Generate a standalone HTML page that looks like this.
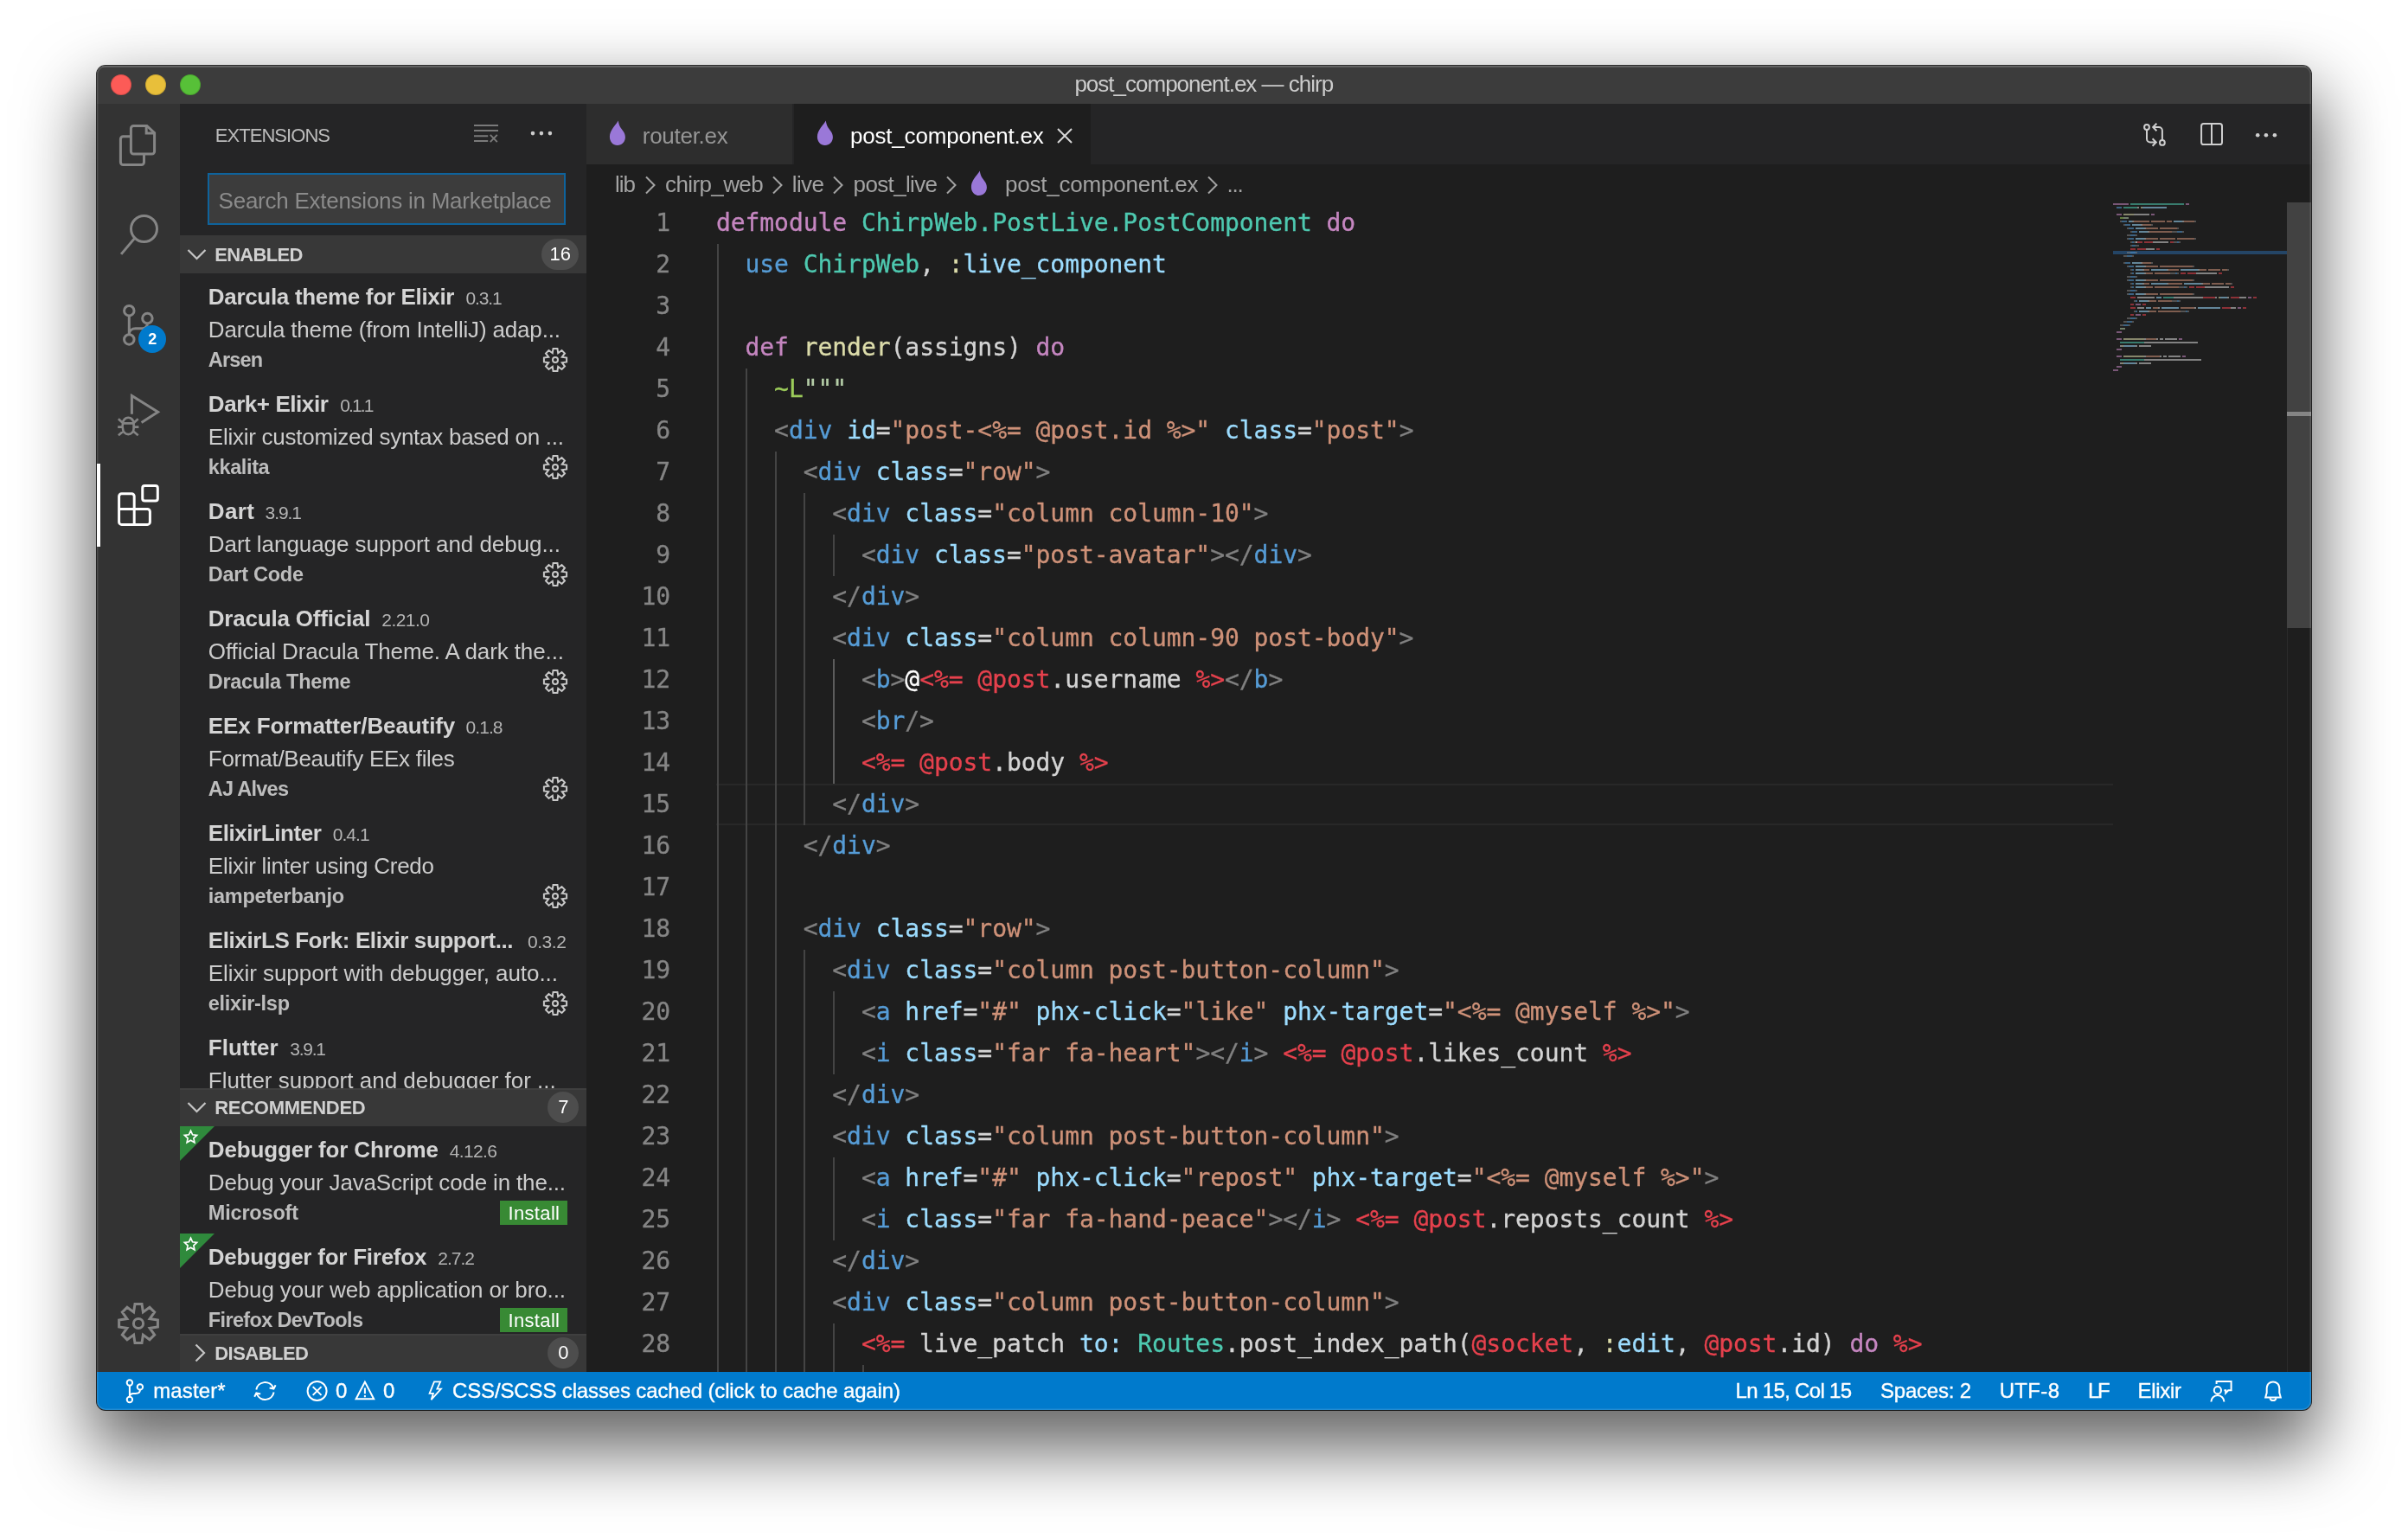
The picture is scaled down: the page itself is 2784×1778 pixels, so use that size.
<!DOCTYPE html>
<html><head><meta charset="utf-8"><title>post_component.ex — chirp</title>
<style>
html,body{margin:0;padding:0}
body{width:2784px;height:1778px;background:#fff;position:relative;overflow:hidden;font-family:'Liberation Sans', sans-serif;}
#win{position:absolute;left:112px;top:76px;width:2560px;height:1554px;border-radius:10px;overflow:hidden;background:#1e1e1e;will-change:transform;}
#shadow{position:absolute;left:112px;top:76px;width:2560px;height:1554px;border-radius:10px;box-shadow:0 0 0 1px rgba(0,0,0,0.8),0 38px 80px 9px rgba(0,0,0,0.6);}
.t{position:absolute;white-space:pre;}
.code{font-family:'DejaVu Sans Mono', 'Liberation Mono', monospace;font-size:28px;-webkit-text-stroke:0.3px;}
.code .ln{position:absolute;left:0;width:97px;text-align:right;color:#858585;line-height:48px;height:48px;letter-spacing:-0.06px}
.code .cl{position:absolute;white-space:pre;line-height:48px;height:48px;letter-spacing:-0.057px}
.code b{font-weight:400}
.code i.g{position:absolute;width:2px;height:48px;background:#444444}
.code i.ga{background:#5c5c5c}
.code b.cy{color:#dcdcaa}
.code b.ck{color:#c586c0}
.code b.cm{color:#4ec9b0}
.code b.cu{color:#569cd6}
.code b.ca{color:#9cdcfe}
.code b.cf{color:#dcdcaa}
.code b.cp{color:#d4d4d4}
.code b.cw{color:#ffffff}
.code b.cg{color:#9ccc5a}
.code b.cq{color:#b5cea8}
.code b.ct{color:#808080}
.code b.cn{color:#569cd6}
.code b.cr{color:#9cdcfe}
.code b.cs{color:#ce9178}
.code b.ce{color:#e6414d}
</style></head>
<body>
<svg width="0" height="0" style="position:absolute"><defs><symbol id="gear" viewBox="-16 -16 32 32"><path d="M-2.45 -13.10L2.45 -13.10L3.21 -7.76L7.53 -11.00L11.00 -7.53L7.76 -3.21L13.10 -2.45L13.10 2.45L7.76 3.21L11.00 7.53L7.53 11.00L3.21 7.76L2.45 13.10L-2.45 13.10L-3.21 7.76L-7.53 11.00L-11.00 7.53L-7.76 3.21L-13.10 2.45L-13.10 -2.45L-7.76 -3.21L-11.00 -7.53L-7.53 -11.00L-3.21 -7.76Z" fill="none" stroke="#c8c8c8" stroke-width="2" stroke-linejoin="miter"/><circle r="3" fill="none" stroke="#c8c8c8" stroke-width="2"/></symbol>
<symbol id="gearbig" viewBox="-28 -28 56 56"><path d="M-4.00 -22.40L4.00 -22.40L5.43 -13.12L13.01 -18.67L18.67 -13.01L13.12 -5.43L22.40 -4.00L22.40 4.00L13.12 5.43L18.67 13.01L13.01 18.67L5.43 13.12L4.00 22.40L-4.00 22.40L-5.43 13.12L-13.01 18.67L-18.67 13.01L-13.12 5.43L-22.40 4.00L-22.40 -4.00L-13.12 -5.43L-18.67 -13.01L-13.01 -18.67L-5.43 -13.12Z" fill="none" stroke="#858585" stroke-width="3" stroke-linejoin="miter"/><circle r="5.6" fill="none" stroke="#858585" stroke-width="3"/></symbol></defs></svg>
<div id="shadow"></div>
<div id="win">
<div style="position:absolute;left:0px;top:0px;width:2560px;height:44px;background:#3c3c3c;box-shadow:inset 0 2px 0 rgba(255,255,255,0.12);"></div>
<div style="position:absolute;left:16px;top:10px;width:24px;height:24px;border-radius:50%;background:#fc5b57;box-shadow:inset 0 0 0 1px rgba(0,0,0,0.14)"></div>
<div style="position:absolute;left:56px;top:10px;width:24px;height:24px;border-radius:50%;background:#e8bf3a;box-shadow:inset 0 0 0 1px rgba(0,0,0,0.14)"></div>
<div style="position:absolute;left:96px;top:10px;width:24px;height:24px;border-radius:50%;background:#57c038;box-shadow:inset 0 0 0 1px rgba(0,0,0,0.14)"></div>
<span class="t" style="left:1130.4px;top:3.7px;font-size:26px;line-height:34px;color:#cccccc;letter-spacing:-0.997px;">post_component.ex — chirp</span>
<div style="position:absolute;left:0px;top:44px;width:96px;height:1466px;background:#333333;"></div>
<div style="position:absolute;left:0px;top:460px;width:4px;height:96px;background:#ffffff;"></div>
<svg style="position:absolute;left:0px;top:44px" width="96" height="1466" viewBox="112 120 96 1466" fill="none" stroke="#858585" stroke-width="3">
<path d="M154.4 145.5H169.8L178.6 153.6V175.1a3 3 0 0 1 -3 3H154.4a3 3 0 0 1 -3 -3V148.5a3 3 0 0 1 3 -3z"/>
<path d="M169.2 145.5V154.1H178.6"/>
<path d="M151.4 157.7H142.4a3 3 0 0 0 -3 3V187.5a3 3 0 0 0 3 3H163.5a3 3 0 0 0 3 -3V178.1"/>
<circle cx="166.5" cy="264.5" r="15"/>
<path d="M155.9 275.1L140.1 293.9"/>
<circle cx="149.3" cy="359.2" r="5.75"/><circle cx="170.4" cy="368.1" r="5.75"/><circle cx="149.3" cy="392.4" r="5.75"/>
<path d="M149.3 365V386.6M170.4 373.9c0 5.9 -4.6 5.9 -9 5.9h-4.5c-4.4 0 -7.6 2.6 -7.6 6.8"/>
<path d="M152.4 478.8V457.4L182.6 476.3L163.6 488.6"/>
<g stroke-width="2.6"><path d="M142 489.4H154.6M142 495.5a6.3 9.3 0 0 1 0 -6.1a6.3 6.6 0 0 1 12.6 0v6.1a6.3 6.6 0 0 1 -12.6 0zM136.2 493.6H142M154.6 493.6H160.4M136.9 484.3L142 489M159.7 484.3L154.6 489M136.9 503.2L142.6 498.4M159.7 503.2L154 498.4"/></g>
<g stroke="#ffffff"><path d="M137.6 603.4V573.7a3 3 0 0 1 3 -3H152.2a3 3 0 0 1 3 3V588.5H170.4a3 3 0 0 1 3 3V603.4a3 3 0 0 1 -3 3H140.6a3 3 0 0 1 -3 -3zM137.6 588.5H155.2V606.4"/>
<rect x="164.75" y="561.6" width="17.55" height="17.5" rx="2.6"/></g>
<use href="#gearbig" x="132" y="1502" width="56" height="56"/>
</svg>
<div style="position:absolute;left:48.2px;top:300px;width:32px;height:32px;border-radius:50%;background:#007acc;color:#fff;font-size:18px;font-weight:700;line-height:32px;text-align:center">2</div>
<div style="position:absolute;left:96px;top:44px;width:470px;height:1466px;background:#252526;"></div>
<span class="t" style="left:136.8px;top:66.3px;font-size:22px;line-height:29px;color:#bbbbbb;letter-spacing:-0.957px;">EXTENSIONS</span>
<svg style="position:absolute;left:428px;top:60px" width="110" height="36" viewBox="540 136 110 36" fill="none" stroke="#7a7a7a" stroke-width="2">
<path d="M548 144.9H576M548 150.9H576M548 157.2H564.2M548 163H564.2M566.8 155.9L574.8 164.1M574.8 155.9L566.8 164.1"/>
<g fill="#cccccc" stroke="none"><circle cx="616" cy="154.1" r="2.3"/><circle cx="625.9" cy="154.1" r="2.3"/><circle cx="635.9" cy="154.1" r="2.3"/></g>
</svg>
<div style="position:absolute;left:128px;top:124px;width:414px;height:60px;background:#3c3c3c;box-sizing:border-box;border:2px solid #0e639c;"></div>
<span class="t" style="left:140.6px;top:139.2px;font-size:26px;line-height:34px;color:#8b8b8b;letter-spacing:-0.255px;">Search Extensions in Marketplace</span>
<div style="position:absolute;left:96px;top:196px;width:470px;height:44px;background:#383838;"></div>
<svg style="position:absolute;left:100px;top:202px" width="32" height="32" viewBox="0 0 32 32"><path d="M5.5 11 L15.5 21 L25.5 11" fill="none" stroke="#c5c5c5" stroke-width="2.2"/></svg>
<span class="t" style="left:136.2px;top:203.8px;font-size:22px;line-height:29px;color:#d0d0d0;font-weight:700;letter-spacing:-0.707px;">ENABLED</span>
<div style="position:absolute;left:514px;top:200px;width:43.4px;height:36px;border-radius:18px;background:#4d4d4d;color:#ffffff;font-size:22px;line-height:36px;text-align:center">16</div>
<span class="t" style="left:128.8px;top:249.5px;font-size:26px;line-height:34px;color:#d4d4d4;font-weight:700;letter-spacing:-0.313px;">Darcula theme for Elixir</span>
<span class="t" style="left:426.6px;top:254.7px;font-size:21px;line-height:27px;color:#b4b4b4;letter-spacing:-1.155px;">0.3.1</span>
<span class="t" style="left:128.8px;top:287.6px;font-size:26px;line-height:34px;color:#cccccc;letter-spacing:-0.169px;">Darcula theme (from IntelliJ) adap...</span>
<span class="t" style="left:128.8px;top:324.9px;font-size:23.5px;line-height:31px;color:#bdbdbd;font-weight:700;letter-spacing:-0.856px;">Arsen</span>
<svg class="gear" style="position:absolute;left:514px;top:324px" width="32" height="32" viewBox="0 0 32 32"><use href="#gear"/></svg>
<span class="t" style="left:128.8px;top:373.5px;font-size:26px;line-height:34px;color:#d4d4d4;font-weight:700;letter-spacing:-0.438px;">Dark+ Elixir</span>
<span class="t" style="left:281.3px;top:378.7px;font-size:21px;line-height:27px;color:#b4b4b4;letter-spacing:-1.880px;">0.1.1</span>
<span class="t" style="left:128.8px;top:411.6px;font-size:26px;line-height:34px;color:#cccccc;letter-spacing:-0.259px;">Elixir customized syntax based on ...</span>
<span class="t" style="left:128.8px;top:448.9px;font-size:23.5px;line-height:31px;color:#bdbdbd;font-weight:700;letter-spacing:-0.379px;">kkalita</span>
<svg class="gear" style="position:absolute;left:514px;top:448px" width="32" height="32" viewBox="0 0 32 32"><use href="#gear"/></svg>
<span class="t" style="left:128.8px;top:497.5px;font-size:26px;line-height:34px;color:#d4d4d4;font-weight:700;letter-spacing:0.395px;">Dart</span>
<span class="t" style="left:194.6px;top:502.7px;font-size:21px;line-height:27px;color:#b4b4b4;letter-spacing:-1.080px;">3.9.1</span>
<span class="t" style="left:128.8px;top:535.6px;font-size:26px;line-height:34px;color:#cccccc;letter-spacing:-0.057px;">Dart language support and debug...</span>
<span class="t" style="left:128.8px;top:572.9px;font-size:23.5px;line-height:31px;color:#bdbdbd;font-weight:700;letter-spacing:-0.262px;">Dart Code</span>
<svg class="gear" style="position:absolute;left:514px;top:572px" width="32" height="32" viewBox="0 0 32 32"><use href="#gear"/></svg>
<span class="t" style="left:128.8px;top:621.5px;font-size:26px;line-height:34px;color:#d4d4d4;font-weight:700;letter-spacing:-0.202px;">Dracula Official</span>
<span class="t" style="left:329.3px;top:626.7px;font-size:21px;line-height:27px;color:#b4b4b4;letter-spacing:-0.558px;">2.21.0</span>
<span class="t" style="left:128.8px;top:659.6px;font-size:26px;line-height:34px;color:#cccccc;letter-spacing:-0.113px;">Official Dracula Theme. A dark the...</span>
<span class="t" style="left:128.8px;top:696.9px;font-size:23.5px;line-height:31px;color:#bdbdbd;font-weight:700;letter-spacing:-0.307px;">Dracula Theme</span>
<svg class="gear" style="position:absolute;left:514px;top:696px" width="32" height="32" viewBox="0 0 32 32"><use href="#gear"/></svg>
<span class="t" style="left:128.8px;top:745.5px;font-size:26px;line-height:34px;color:#d4d4d4;font-weight:700;letter-spacing:-0.097px;">EEx Formatter/Beautify</span>
<span class="t" style="left:426.6px;top:750.7px;font-size:21px;line-height:27px;color:#b4b4b4;letter-spacing:-0.955px;">0.1.8</span>
<span class="t" style="left:128.8px;top:783.6px;font-size:26px;line-height:34px;color:#cccccc;letter-spacing:-0.287px;">Format/Beautify EEx files</span>
<span class="t" style="left:128.8px;top:820.9px;font-size:23.5px;line-height:31px;color:#bdbdbd;font-weight:700;letter-spacing:-0.744px;">AJ Alves</span>
<svg class="gear" style="position:absolute;left:514px;top:820px" width="32" height="32" viewBox="0 0 32 32"><use href="#gear"/></svg>
<span class="t" style="left:128.8px;top:869.5px;font-size:26px;line-height:34px;color:#d4d4d4;font-weight:700;letter-spacing:-0.439px;">ElixirLinter</span>
<span class="t" style="left:272.7px;top:874.7px;font-size:21px;line-height:27px;color:#b4b4b4;letter-spacing:-0.955px;">0.4.1</span>
<span class="t" style="left:128.8px;top:907.6px;font-size:26px;line-height:34px;color:#cccccc;letter-spacing:-0.255px;">Elixir linter using Credo</span>
<span class="t" style="left:128.8px;top:944.9px;font-size:23.5px;line-height:31px;color:#bdbdbd;font-weight:700;letter-spacing:-0.285px;">iampeterbanjo</span>
<svg class="gear" style="position:absolute;left:514px;top:944px" width="32" height="32" viewBox="0 0 32 32"><use href="#gear"/></svg>
<span class="t" style="left:128.8px;top:993.5px;font-size:26px;line-height:34px;color:#d4d4d4;font-weight:700;letter-spacing:-0.410px;">ElixirLS Fork: Elixir support...</span>
<span class="t" style="left:497.9px;top:998.7px;font-size:21px;line-height:27px;color:#b4b4b4;letter-spacing:-0.405px;">0.3.2</span>
<span class="t" style="left:128.8px;top:1031.6px;font-size:26px;line-height:34px;color:#cccccc;letter-spacing:-0.053px;">Elixir support with debugger, auto...</span>
<span class="t" style="left:128.8px;top:1068.9px;font-size:23.5px;line-height:31px;color:#bdbdbd;font-weight:700;letter-spacing:-0.273px;">elixir-lsp</span>
<svg class="gear" style="position:absolute;left:514px;top:1068px" width="32" height="32" viewBox="0 0 32 32"><use href="#gear"/></svg>
<div style="position:absolute;left:96px;top:1108px;width:470px;height:74px;overflow:hidden"><div style="position:absolute;left:-96px;top:-1108px">
<span class="t" style="left:128.8px;top:1117.5px;font-size:26px;line-height:34px;color:#d4d4d4;font-weight:700;">Flutter</span>
<span class="t" style="left:223.2px;top:1122.7px;font-size:21px;line-height:27px;color:#b4b4b4;letter-spacing:-1.230px;">3.9.1</span>
<span class="t" style="left:128.8px;top:1155.6px;font-size:26px;line-height:34px;color:#cccccc;letter-spacing:0.006px;">Flutter support and debugger for ...</span>
</div></div>
<div style="position:absolute;left:96px;top:1182px;width:470px;height:44px;background:#383838;box-shadow:inset 0 2px 0 rgba(255,255,255,0.035);"></div>
<svg style="position:absolute;left:100px;top:1188px" width="32" height="32" viewBox="0 0 32 32"><path d="M5.5 11 L15.5 21 L25.5 11" fill="none" stroke="#c5c5c5" stroke-width="2.2"/></svg>
<span class="t" style="left:136.2px;top:1189.8px;font-size:22px;line-height:29px;color:#d0d0d0;font-weight:700;letter-spacing:-0.273px;">RECOMMENDED</span>
<div style="position:absolute;left:521.4px;top:1186px;width:36px;height:36px;border-radius:18px;background:#4d4d4d;color:#ffffff;font-size:22px;line-height:36px;text-align:center">7</div>
<svg style="position:absolute;left:96px;top:1226px" width="42" height="42" viewBox="0 0 42 42"><path d="M0 0H40L0 40Z" fill="#2f8a3c"/><path d="M12.5 5.2l2.1 4.6 5 .6-3.7 3.4 1 5-4.4-2.5-4.4 2.5 1-5-3.7-3.4 5-.6z" fill="none" stroke="#fff" stroke-width="1.7" stroke-linejoin="miter"/></svg>
<span class="t" style="left:128.8px;top:1235.5px;font-size:26px;line-height:34px;color:#d4d4d4;font-weight:700;letter-spacing:-0.144px;">Debugger for Chrome</span>
<span class="t" style="left:407.7px;top:1240.7px;font-size:21px;line-height:27px;color:#b4b4b4;letter-spacing:-0.618px;">4.12.6</span>
<span class="t" style="left:128.8px;top:1273.6px;font-size:26px;line-height:34px;color:#cccccc;letter-spacing:-0.169px;">Debug your JavaScript code in the...</span>
<span class="t" style="left:128.8px;top:1310.9px;font-size:23.5px;line-height:31px;color:#bdbdbd;font-weight:700;letter-spacing:-0.194px;">Microsoft</span>
<div style="position:absolute;left:466px;top:1312px;width:78px;height:28px;background:#388a34;"></div>
<span class="t" style="left:475.5px;top:1311.9px;font-size:22px;line-height:29px;color:#ffffff;letter-spacing:0.336px;">Install</span>
<div style="position:absolute;left:96px;top:1350px;width:470px;height:116px;overflow:hidden"><div style="position:absolute;left:-96px;top:-1350px">
<svg style="position:absolute;left:96px;top:1350px" width="42" height="42" viewBox="0 0 42 42"><path d="M0 0H40L0 40Z" fill="#2f8a3c"/><path d="M12.5 5.2l2.1 4.6 5 .6-3.7 3.4 1 5-4.4-2.5-4.4 2.5 1-5-3.7-3.4 5-.6z" fill="none" stroke="#fff" stroke-width="1.7" stroke-linejoin="miter"/></svg>
<span class="t" style="left:128.8px;top:1359.5px;font-size:26px;line-height:34px;color:#d4d4d4;font-weight:700;letter-spacing:-0.239px;">Debugger for Firefox</span>
<span class="t" style="left:394.3px;top:1364.7px;font-size:21px;line-height:27px;color:#b4b4b4;letter-spacing:-1.005px;">2.7.2</span>
<span class="t" style="left:128.8px;top:1397.6px;font-size:26px;line-height:34px;color:#cccccc;letter-spacing:-0.129px;">Debug your web application or bro...</span>
<span class="t" style="left:128.8px;top:1434.9px;font-size:23.5px;line-height:31px;color:#bdbdbd;font-weight:700;letter-spacing:-0.648px;">Firefox DevTools</span>
<div style="position:absolute;left:466px;top:1436px;width:78px;height:28px;background:#388a34;"></div>
<span class="t" style="left:475.5px;top:1435.9px;font-size:22px;line-height:29px;color:#ffffff;letter-spacing:0.336px;">Install</span>
</div></div>
<div style="position:absolute;left:96px;top:1466px;width:470px;height:44px;background:#383838;box-shadow:inset 0 2px 0 rgba(255,255,255,0.035);"></div>
<svg style="position:absolute;left:104px;top:1472px" width="32" height="32" viewBox="0 0 32 32"><path d="M10.5 6.5 L20 16 L10.5 25.5" fill="none" stroke="#c5c5c5" stroke-width="2.2"/></svg>
<span class="t" style="left:136.2px;top:1473.8px;font-size:22px;line-height:29px;color:#d0d0d0;font-weight:700;letter-spacing:-0.522px;">DISABLED</span>
<div style="position:absolute;left:521.4px;top:1470px;width:36px;height:36px;border-radius:18px;background:#4d4d4d;color:#ffffff;font-size:22px;line-height:36px;text-align:center">0</div>
<div style="position:absolute;left:566px;top:44px;width:1994px;height:70px;background:#252526;"></div>
<div style="position:absolute;left:566px;top:44px;width:238px;height:70px;background:#2d2d2d;"></div>
<div style="position:absolute;left:806px;top:44px;width:343px;height:70px;background:#1e1e1e;"></div>
<svg style="position:absolute;left:591px;top:63px" width="22" height="30" viewBox="0 0 22 30"><path d="M11.8 0.4C9.5 5 1.9 11 1.9 19c0 6 3.9 10 8.9 10 5.2 0 9.1-3.800000000000001 9.1-9.4C19.9 13 14.5 10.5 12.8 5 12.3 3.4 12 1.8 11.8 0.4z" fill="#9a78d8"/></svg>
<span class="t" style="left:630.8px;top:64.2px;font-size:26px;line-height:34px;color:#969696;letter-spacing:-0.284px;">router.ex</span>
<svg style="position:absolute;left:831px;top:63px" width="22" height="30" viewBox="0 0 22 30"><path d="M11.8 0.4C9.5 5 1.9 11 1.9 19c0 6 3.9 10 8.9 10 5.2 0 9.1-3.800000000000001 9.1-9.4C19.9 13 14.5 10.5 12.8 5 12.3 3.4 12 1.8 11.8 0.4z" fill="#9a78d8"/></svg>
<span class="t" style="left:871.0px;top:64.2px;font-size:26px;line-height:34px;color:#ffffff;letter-spacing:-0.196px;">post_component.ex</span>
<svg style="position:absolute;left:1108px;top:70px" width="22" height="22" viewBox="0 0 22 22"><path d="M3 3L19 19M19 3L3 19" stroke="#d8d8d8" stroke-width="2" fill="none"/></svg>
<svg style="position:absolute;left:2358px;top:60px" width="180" height="40" viewBox="2470 136 180 40" fill="none" stroke="#cfcfcf" stroke-width="2">
<circle cx="2482" cy="147" r="2.9"/><circle cx="2499.9" cy="164.9" r="2.9"/>
<path d="M2482 150V160.5a4 4 0 0 0 4 4H2492M2488.6 160.3L2492.8 164.5L2488.6 168.7"/>
<path d="M2499.9 162V151a4 4 0 0 0 -4 -4H2490M2493.4 142.8L2489.2 147L2493.4 151.2"/>
<rect x="2545.1" y="143.1" width="23.9" height="23.9" rx="2.6"/><path d="M2557 143.1V167"/>
<g fill="#cfcfcf" stroke="none"><circle cx="2610.2" cy="156.2" r="2.3"/><circle cx="2619.9" cy="156.2" r="2.3"/><circle cx="2629.9" cy="156.2" r="2.3"/></g>
</svg>
<span class="t" style="left:599.0px;top:120.4px;font-size:26px;line-height:34px;color:#a3a3a3;letter-spacing:-1.008px;">lib</span>
<span class="t" style="left:657.0px;top:120.4px;font-size:26px;line-height:34px;color:#a3a3a3;letter-spacing:-0.614px;">chirp_web</span>
<span class="t" style="left:803.7px;top:120.4px;font-size:26px;line-height:34px;color:#a3a3a3;letter-spacing:-0.572px;">live</span>
<span class="t" style="left:874.6px;top:120.4px;font-size:26px;line-height:34px;color:#a3a3a3;letter-spacing:-0.653px;">post_live</span>
<svg style="position:absolute;left:1009px;top:121px" width="22" height="30" viewBox="0 0 22 30"><path d="M11.8 0.4C9.5 5 1.9 11 1.9 19c0 6 3.9 10 8.9 10 5.2 0 9.1-3.800000000000001 9.1-9.4C19.9 13 14.5 10.5 12.8 5 12.3 3.4 12 1.8 11.8 0.4z" fill="#9a78d8"/></svg>
<span class="t" style="left:1049.9px;top:120.4px;font-size:26px;line-height:34px;color:#a3a3a3;letter-spacing:-0.209px;">post_component.ex</span>
<span class="t" style="left:1306.6px;top:120.4px;font-size:26px;line-height:34px;color:#a3a3a3;letter-spacing:-1.236px;">...</span>
<svg style="position:absolute;left:630px;top:125px" width="20" height="26" viewBox="0 0 20 26"><path d="M5 3.5L14.5 13L5 22.5" fill="none" stroke="#a3a3a3" stroke-width="2"/></svg>
<svg style="position:absolute;left:776.7px;top:125px" width="20" height="26" viewBox="0 0 20 26"><path d="M5 3.5L14.5 13L5 22.5" fill="none" stroke="#a3a3a3" stroke-width="2"/></svg>
<svg style="position:absolute;left:847px;top:125px" width="20" height="26" viewBox="0 0 20 26"><path d="M5 3.5L14.5 13L5 22.5" fill="none" stroke="#a3a3a3" stroke-width="2"/></svg>
<svg style="position:absolute;left:978px;top:125px" width="20" height="26" viewBox="0 0 20 26"><path d="M5 3.5L14.5 13L5 22.5" fill="none" stroke="#a3a3a3" stroke-width="2"/></svg>
<svg style="position:absolute;left:1279.7px;top:125px" width="20" height="26" viewBox="0 0 20 26"><path d="M5 3.5L14.5 13L5 22.5" fill="none" stroke="#a3a3a3" stroke-width="2"/></svg>
<div class="code" style="position:absolute;left:566px;top:158px;width:1966px;height:1352px;overflow:hidden">
<div style="position:absolute;left:149.9px;top:672px;width:1615.1px;height:48px;box-sizing:border-box;border-top:2px solid #282828;border-bottom:2px solid #282828"></div>
<span class="ln" style="top:0px">1</span>
<span class="cl" style="left:149.9px;top:0px"><b class="ck">defmodule</b><b class="cp"> </b><b class="cm">ChirpWeb.PostLive.PostComponent</b><b class="cp"> </b><b class="ck">do</b></span>
<i class="g" style="left:150.5px;top:48px"></i>
<span class="ln" style="top:48px">2</span>
<span class="cl" style="left:183.5px;top:48px"><b class="cu">use</b><b class="cp"> </b><b class="cm">ChirpWeb</b><b class="cp">, </b><b class="cy">:</b><b class="ca">live_component</b></span>
<i class="g" style="left:150.5px;top:96px"></i>
<span class="ln" style="top:96px">3</span>
<i class="g" style="left:150.5px;top:144px"></i>
<span class="ln" style="top:144px">4</span>
<span class="cl" style="left:183.5px;top:144px"><b class="ck">def</b><b class="cp"> </b><b class="cf">render</b><b class="cp">(assigns) </b><b class="ck">do</b></span>
<i class="g" style="left:150.5px;top:192px"></i>
<i class="g" style="left:184.1px;top:192px"></i>
<span class="ln" style="top:192px">5</span>
<span class="cl" style="left:217.1px;top:192px"><b class="cg">~L</b><b class="cq">"""</b></span>
<i class="g" style="left:150.5px;top:240px"></i>
<i class="g" style="left:184.1px;top:240px"></i>
<span class="ln" style="top:240px">6</span>
<span class="cl" style="left:217.1px;top:240px"><b class="ct">&lt;</b><b class="cn">div</b><b class="cp"> </b><b class="cr">id</b><b class="cp">=</b><b class="cs">"post-&lt;%= @post.id %&gt;"</b><b class="cp"> </b><b class="cr">class</b><b class="cp">=</b><b class="cs">"post"</b><b class="ct">&gt;</b></span>
<i class="g" style="left:150.5px;top:288px"></i>
<i class="g" style="left:184.1px;top:288px"></i>
<i class="g" style="left:217.7px;top:288px"></i>
<span class="ln" style="top:288px">7</span>
<span class="cl" style="left:250.7px;top:288px"><b class="ct">&lt;</b><b class="cn">div</b><b class="cp"> </b><b class="cr">class</b><b class="cp">=</b><b class="cs">"row"</b><b class="ct">&gt;</b></span>
<i class="g" style="left:150.5px;top:336px"></i>
<i class="g" style="left:184.1px;top:336px"></i>
<i class="g" style="left:217.7px;top:336px"></i>
<i class="g" style="left:251.3px;top:336px"></i>
<span class="ln" style="top:336px">8</span>
<span class="cl" style="left:284.3px;top:336px"><b class="ct">&lt;</b><b class="cn">div</b><b class="cp"> </b><b class="cr">class</b><b class="cp">=</b><b class="cs">"column column-10"</b><b class="ct">&gt;</b></span>
<i class="g" style="left:150.5px;top:384px"></i>
<i class="g" style="left:184.1px;top:384px"></i>
<i class="g" style="left:217.7px;top:384px"></i>
<i class="g" style="left:251.3px;top:384px"></i>
<i class="g" style="left:284.9px;top:384px"></i>
<span class="ln" style="top:384px">9</span>
<span class="cl" style="left:317.9px;top:384px"><b class="ct">&lt;</b><b class="cn">div</b><b class="cp"> </b><b class="cr">class</b><b class="cp">=</b><b class="cs">"post-avatar"</b><b class="ct">&gt;</b><b class="ct">&lt;/</b><b class="cn">div</b><b class="ct">&gt;</b></span>
<i class="g" style="left:150.5px;top:432px"></i>
<i class="g" style="left:184.1px;top:432px"></i>
<i class="g" style="left:217.7px;top:432px"></i>
<i class="g" style="left:251.3px;top:432px"></i>
<span class="ln" style="top:432px">10</span>
<span class="cl" style="left:284.3px;top:432px"><b class="ct">&lt;/</b><b class="cn">div</b><b class="ct">&gt;</b></span>
<i class="g" style="left:150.5px;top:480px"></i>
<i class="g" style="left:184.1px;top:480px"></i>
<i class="g" style="left:217.7px;top:480px"></i>
<i class="g" style="left:251.3px;top:480px"></i>
<span class="ln" style="top:480px">11</span>
<span class="cl" style="left:284.3px;top:480px"><b class="ct">&lt;</b><b class="cn">div</b><b class="cp"> </b><b class="cr">class</b><b class="cp">=</b><b class="cs">"column column-90 post-body"</b><b class="ct">&gt;</b></span>
<i class="g" style="left:150.5px;top:528px"></i>
<i class="g" style="left:184.1px;top:528px"></i>
<i class="g" style="left:217.7px;top:528px"></i>
<i class="g" style="left:251.3px;top:528px"></i>
<i class="g ga" style="left:284.9px;top:528px"></i>
<span class="ln" style="top:528px">12</span>
<span class="cl" style="left:317.9px;top:528px"><b class="ct">&lt;</b><b class="cn">b</b><b class="ct">&gt;</b><b class="cw">@</b><b class="ce">&lt;%= @post</b><b class="cp">.username </b><b class="ce">%&gt;</b><b class="ct">&lt;/</b><b class="cn">b</b><b class="ct">&gt;</b></span>
<i class="g" style="left:150.5px;top:576px"></i>
<i class="g" style="left:184.1px;top:576px"></i>
<i class="g" style="left:217.7px;top:576px"></i>
<i class="g" style="left:251.3px;top:576px"></i>
<i class="g ga" style="left:284.9px;top:576px"></i>
<span class="ln" style="top:576px">13</span>
<span class="cl" style="left:317.9px;top:576px"><b class="ct">&lt;</b><b class="cn">br</b><b class="ct">/&gt;</b></span>
<i class="g" style="left:150.5px;top:624px"></i>
<i class="g" style="left:184.1px;top:624px"></i>
<i class="g" style="left:217.7px;top:624px"></i>
<i class="g" style="left:251.3px;top:624px"></i>
<i class="g ga" style="left:284.9px;top:624px"></i>
<span class="ln" style="top:624px">14</span>
<span class="cl" style="left:317.9px;top:624px"><b class="ce">&lt;%= @post</b><b class="cp">.body </b><b class="ce">%&gt;</b></span>
<i class="g" style="left:150.5px;top:672px"></i>
<i class="g" style="left:184.1px;top:672px"></i>
<i class="g" style="left:217.7px;top:672px"></i>
<i class="g" style="left:251.3px;top:672px"></i>
<span class="ln" style="top:672px">15</span>
<span class="cl" style="left:284.3px;top:672px"><b class="ct">&lt;/</b><b class="cn">div</b><b class="ct">&gt;</b></span>
<i class="g" style="left:150.5px;top:720px"></i>
<i class="g" style="left:184.1px;top:720px"></i>
<i class="g" style="left:217.7px;top:720px"></i>
<span class="ln" style="top:720px">16</span>
<span class="cl" style="left:250.7px;top:720px"><b class="ct">&lt;/</b><b class="cn">div</b><b class="ct">&gt;</b></span>
<i class="g" style="left:150.5px;top:768px"></i>
<i class="g" style="left:184.1px;top:768px"></i>
<i class="g" style="left:217.7px;top:768px"></i>
<span class="ln" style="top:768px">17</span>
<i class="g" style="left:150.5px;top:816px"></i>
<i class="g" style="left:184.1px;top:816px"></i>
<i class="g" style="left:217.7px;top:816px"></i>
<span class="ln" style="top:816px">18</span>
<span class="cl" style="left:250.7px;top:816px"><b class="ct">&lt;</b><b class="cn">div</b><b class="cp"> </b><b class="cr">class</b><b class="cp">=</b><b class="cs">"row"</b><b class="ct">&gt;</b></span>
<i class="g" style="left:150.5px;top:864px"></i>
<i class="g" style="left:184.1px;top:864px"></i>
<i class="g" style="left:217.7px;top:864px"></i>
<i class="g" style="left:251.3px;top:864px"></i>
<span class="ln" style="top:864px">19</span>
<span class="cl" style="left:284.3px;top:864px"><b class="ct">&lt;</b><b class="cn">div</b><b class="cp"> </b><b class="cr">class</b><b class="cp">=</b><b class="cs">"column post-button-column"</b><b class="ct">&gt;</b></span>
<i class="g" style="left:150.5px;top:912px"></i>
<i class="g" style="left:184.1px;top:912px"></i>
<i class="g" style="left:217.7px;top:912px"></i>
<i class="g" style="left:251.3px;top:912px"></i>
<i class="g" style="left:284.9px;top:912px"></i>
<span class="ln" style="top:912px">20</span>
<span class="cl" style="left:317.9px;top:912px"><b class="ct">&lt;</b><b class="cn">a</b><b class="cp"> </b><b class="cr">href</b><b class="cp">=</b><b class="cs">"#"</b><b class="cp"> </b><b class="cr">phx-click</b><b class="cp">=</b><b class="cs">"like"</b><b class="cp"> </b><b class="cr">phx-target</b><b class="cp">=</b><b class="cs">"&lt;%= @myself %&gt;"</b><b class="ct">&gt;</b></span>
<i class="g" style="left:150.5px;top:960px"></i>
<i class="g" style="left:184.1px;top:960px"></i>
<i class="g" style="left:217.7px;top:960px"></i>
<i class="g" style="left:251.3px;top:960px"></i>
<i class="g" style="left:284.9px;top:960px"></i>
<span class="ln" style="top:960px">21</span>
<span class="cl" style="left:317.9px;top:960px"><b class="ct">&lt;</b><b class="cn">i</b><b class="cp"> </b><b class="cr">class</b><b class="cp">=</b><b class="cs">"far fa-heart"</b><b class="ct">&gt;</b><b class="ct">&lt;/</b><b class="cn">i</b><b class="ct">&gt;</b><b class="cp"> </b><b class="ce">&lt;%= @post</b><b class="cp">.likes_count </b><b class="ce">%&gt;</b></span>
<i class="g" style="left:150.5px;top:1008px"></i>
<i class="g" style="left:184.1px;top:1008px"></i>
<i class="g" style="left:217.7px;top:1008px"></i>
<i class="g" style="left:251.3px;top:1008px"></i>
<span class="ln" style="top:1008px">22</span>
<span class="cl" style="left:284.3px;top:1008px"><b class="ct">&lt;/</b><b class="cn">div</b><b class="ct">&gt;</b></span>
<i class="g" style="left:150.5px;top:1056px"></i>
<i class="g" style="left:184.1px;top:1056px"></i>
<i class="g" style="left:217.7px;top:1056px"></i>
<i class="g" style="left:251.3px;top:1056px"></i>
<span class="ln" style="top:1056px">23</span>
<span class="cl" style="left:284.3px;top:1056px"><b class="ct">&lt;</b><b class="cn">div</b><b class="cp"> </b><b class="cr">class</b><b class="cp">=</b><b class="cs">"column post-button-column"</b><b class="ct">&gt;</b></span>
<i class="g" style="left:150.5px;top:1104px"></i>
<i class="g" style="left:184.1px;top:1104px"></i>
<i class="g" style="left:217.7px;top:1104px"></i>
<i class="g" style="left:251.3px;top:1104px"></i>
<i class="g" style="left:284.9px;top:1104px"></i>
<span class="ln" style="top:1104px">24</span>
<span class="cl" style="left:317.9px;top:1104px"><b class="ct">&lt;</b><b class="cn">a</b><b class="cp"> </b><b class="cr">href</b><b class="cp">=</b><b class="cs">"#"</b><b class="cp"> </b><b class="cr">phx-click</b><b class="cp">=</b><b class="cs">"repost"</b><b class="cp"> </b><b class="cr">phx-target</b><b class="cp">=</b><b class="cs">"&lt;%= @myself %&gt;"</b><b class="ct">&gt;</b></span>
<i class="g" style="left:150.5px;top:1152px"></i>
<i class="g" style="left:184.1px;top:1152px"></i>
<i class="g" style="left:217.7px;top:1152px"></i>
<i class="g" style="left:251.3px;top:1152px"></i>
<i class="g" style="left:284.9px;top:1152px"></i>
<span class="ln" style="top:1152px">25</span>
<span class="cl" style="left:317.9px;top:1152px"><b class="ct">&lt;</b><b class="cn">i</b><b class="cp"> </b><b class="cr">class</b><b class="cp">=</b><b class="cs">"far fa-hand-peace"</b><b class="ct">&gt;</b><b class="ct">&lt;/</b><b class="cn">i</b><b class="ct">&gt;</b><b class="cp"> </b><b class="ce">&lt;%= @post</b><b class="cp">.reposts_count </b><b class="ce">%&gt;</b></span>
<i class="g" style="left:150.5px;top:1200px"></i>
<i class="g" style="left:184.1px;top:1200px"></i>
<i class="g" style="left:217.7px;top:1200px"></i>
<i class="g" style="left:251.3px;top:1200px"></i>
<span class="ln" style="top:1200px">26</span>
<span class="cl" style="left:284.3px;top:1200px"><b class="ct">&lt;/</b><b class="cn">div</b><b class="ct">&gt;</b></span>
<i class="g" style="left:150.5px;top:1248px"></i>
<i class="g" style="left:184.1px;top:1248px"></i>
<i class="g" style="left:217.7px;top:1248px"></i>
<i class="g" style="left:251.3px;top:1248px"></i>
<span class="ln" style="top:1248px">27</span>
<span class="cl" style="left:284.3px;top:1248px"><b class="ct">&lt;</b><b class="cn">div</b><b class="cp"> </b><b class="cr">class</b><b class="cp">=</b><b class="cs">"column post-button-column"</b><b class="ct">&gt;</b></span>
<i class="g" style="left:150.5px;top:1296px"></i>
<i class="g" style="left:184.1px;top:1296px"></i>
<i class="g" style="left:217.7px;top:1296px"></i>
<i class="g" style="left:251.3px;top:1296px"></i>
<i class="g" style="left:284.9px;top:1296px"></i>
<span class="ln" style="top:1296px">28</span>
<span class="cl" style="left:317.9px;top:1296px"><b class="ce">&lt;%=</b><b class="cp"> live_patch </b><b class="ca">to:</b><b class="cp"> </b><b class="cm">Routes</b><b class="cp">.post_index_path(</b><b class="ce">@socket</b><b class="cp">, </b><b class="cy">:</b><b class="ca">edit</b><b class="cp">, </b><b class="ce">@post</b><b class="cp">.id) </b><b class="ck">do</b><b class="cp"> </b><b class="ce">%&gt;</b></span>
<i class="g" style="left:150.5px;top:1344px"></i>
<i class="g" style="left:184.1px;top:1344px"></i>
<i class="g" style="left:217.7px;top:1344px"></i>
<i class="g" style="left:251.3px;top:1344px"></i>
<i class="g" style="left:284.9px;top:1344px"></i>
<i class="g" style="left:318.5px;top:1344px"></i>
<span class="ln" style="top:1344px">29</span>
<span class="cl" style="left:351.5px;top:1344px"><b class="ct">&lt;</b><b class="cn">i</b><b class="cp"> </b><b class="cr">class</b><b class="cp">=</b><b class="cs">"far fa-edit"</b><b class="ct">&gt;</b><b class="ct">&lt;/</b><b class="cn">i</b><b class="ct">&gt;</b></span>
</div>
<svg style="position:absolute;left:2331px;top:158px" width="201" height="200" viewBox="0 0 201 200" shape-rendering="crispEdges">
<rect x="0" y="56" width="201" height="4" fill="#264f78" opacity="0.8"/><g opacity="0.55">
<rect x="0" y="1" width="18" height="2" fill="#c586c0"/>
<rect x="20" y="1" width="62" height="2" fill="#4ec9b0"/>
<rect x="84" y="1" width="4" height="2" fill="#c586c0"/>
<rect x="4" y="5" width="6" height="2" fill="#569cd6"/>
<rect x="12" y="5" width="16" height="2" fill="#4ec9b0"/>
<rect x="28" y="5" width="2" height="2" fill="#d4d4d4"/>
<rect x="32" y="5" width="2" height="2" fill="#dcdcaa"/>
<rect x="34" y="5" width="28" height="2" fill="#9cdcfe"/>
<rect x="4" y="13" width="6" height="2" fill="#c586c0"/>
<rect x="12" y="13" width="12" height="2" fill="#dcdcaa"/>
<rect x="24" y="13" width="18" height="2" fill="#d4d4d4"/>
<rect x="44" y="13" width="4" height="2" fill="#c586c0"/>
<rect x="8" y="17" width="4" height="2" fill="#9ccc5a"/>
<rect x="12" y="17" width="6" height="2" fill="#b5cea8"/>
<rect x="8" y="21" width="2" height="2" fill="#808080"/>
<rect x="10" y="21" width="6" height="2" fill="#569cd6"/>
<rect x="18" y="21" width="4" height="2" fill="#9cdcfe"/>
<rect x="22" y="21" width="2" height="2" fill="#d4d4d4"/>
<rect x="24" y="21" width="18" height="2" fill="#ce9178"/>
<rect x="44" y="21" width="16" height="2" fill="#ce9178"/>
<rect x="62" y="21" width="6" height="2" fill="#ce9178"/>
<rect x="70" y="21" width="10" height="2" fill="#9cdcfe"/>
<rect x="80" y="21" width="2" height="2" fill="#d4d4d4"/>
<rect x="82" y="21" width="12" height="2" fill="#ce9178"/>
<rect x="94" y="21" width="2" height="2" fill="#808080"/>
<rect x="12" y="25" width="2" height="2" fill="#808080"/>
<rect x="14" y="25" width="6" height="2" fill="#569cd6"/>
<rect x="22" y="25" width="10" height="2" fill="#9cdcfe"/>
<rect x="32" y="25" width="2" height="2" fill="#d4d4d4"/>
<rect x="34" y="25" width="10" height="2" fill="#ce9178"/>
<rect x="44" y="25" width="2" height="2" fill="#808080"/>
<rect x="16" y="29" width="2" height="2" fill="#808080"/>
<rect x="18" y="29" width="6" height="2" fill="#569cd6"/>
<rect x="26" y="29" width="10" height="2" fill="#9cdcfe"/>
<rect x="36" y="29" width="2" height="2" fill="#d4d4d4"/>
<rect x="38" y="29" width="14" height="2" fill="#ce9178"/>
<rect x="54" y="29" width="20" height="2" fill="#ce9178"/>
<rect x="74" y="29" width="2" height="2" fill="#808080"/>
<rect x="20" y="33" width="2" height="2" fill="#808080"/>
<rect x="22" y="33" width="6" height="2" fill="#569cd6"/>
<rect x="30" y="33" width="10" height="2" fill="#9cdcfe"/>
<rect x="40" y="33" width="2" height="2" fill="#d4d4d4"/>
<rect x="42" y="33" width="26" height="2" fill="#ce9178"/>
<rect x="68" y="33" width="2" height="2" fill="#808080"/>
<rect x="70" y="33" width="4" height="2" fill="#808080"/>
<rect x="74" y="33" width="6" height="2" fill="#569cd6"/>
<rect x="80" y="33" width="2" height="2" fill="#808080"/>
<rect x="16" y="37" width="4" height="2" fill="#808080"/>
<rect x="20" y="37" width="6" height="2" fill="#569cd6"/>
<rect x="26" y="37" width="2" height="2" fill="#808080"/>
<rect x="16" y="41" width="2" height="2" fill="#808080"/>
<rect x="18" y="41" width="6" height="2" fill="#569cd6"/>
<rect x="26" y="41" width="10" height="2" fill="#9cdcfe"/>
<rect x="36" y="41" width="2" height="2" fill="#d4d4d4"/>
<rect x="38" y="41" width="14" height="2" fill="#ce9178"/>
<rect x="54" y="41" width="18" height="2" fill="#ce9178"/>
<rect x="74" y="41" width="20" height="2" fill="#ce9178"/>
<rect x="94" y="41" width="2" height="2" fill="#808080"/>
<rect x="20" y="45" width="2" height="2" fill="#808080"/>
<rect x="22" y="45" width="2" height="2" fill="#569cd6"/>
<rect x="24" y="45" width="2" height="2" fill="#808080"/>
<rect x="26" y="45" width="2" height="2" fill="#ffffff"/>
<rect x="28" y="45" width="6" height="2" fill="#e6414d"/>
<rect x="36" y="45" width="10" height="2" fill="#e6414d"/>
<rect x="46" y="45" width="18" height="2" fill="#d4d4d4"/>
<rect x="66" y="45" width="4" height="2" fill="#e6414d"/>
<rect x="70" y="45" width="4" height="2" fill="#808080"/>
<rect x="74" y="45" width="2" height="2" fill="#569cd6"/>
<rect x="76" y="45" width="2" height="2" fill="#808080"/>
<rect x="20" y="49" width="2" height="2" fill="#808080"/>
<rect x="22" y="49" width="4" height="2" fill="#569cd6"/>
<rect x="26" y="49" width="4" height="2" fill="#808080"/>
<rect x="20" y="53" width="6" height="2" fill="#e6414d"/>
<rect x="28" y="53" width="10" height="2" fill="#e6414d"/>
<rect x="38" y="53" width="10" height="2" fill="#d4d4d4"/>
<rect x="50" y="53" width="4" height="2" fill="#e6414d"/>
<rect x="16" y="57" width="4" height="2" fill="#808080"/>
<rect x="20" y="57" width="6" height="2" fill="#569cd6"/>
<rect x="26" y="57" width="2" height="2" fill="#808080"/>
<rect x="12" y="61" width="4" height="2" fill="#808080"/>
<rect x="16" y="61" width="6" height="2" fill="#569cd6"/>
<rect x="22" y="61" width="2" height="2" fill="#808080"/>
<rect x="12" y="69" width="2" height="2" fill="#808080"/>
<rect x="14" y="69" width="6" height="2" fill="#569cd6"/>
<rect x="22" y="69" width="10" height="2" fill="#9cdcfe"/>
<rect x="32" y="69" width="2" height="2" fill="#d4d4d4"/>
<rect x="34" y="69" width="10" height="2" fill="#ce9178"/>
<rect x="44" y="69" width="2" height="2" fill="#808080"/>
<rect x="16" y="73" width="2" height="2" fill="#808080"/>
<rect x="18" y="73" width="6" height="2" fill="#569cd6"/>
<rect x="26" y="73" width="10" height="2" fill="#9cdcfe"/>
<rect x="36" y="73" width="2" height="2" fill="#d4d4d4"/>
<rect x="38" y="73" width="14" height="2" fill="#ce9178"/>
<rect x="54" y="73" width="38" height="2" fill="#ce9178"/>
<rect x="92" y="73" width="2" height="2" fill="#808080"/>
<rect x="20" y="77" width="2" height="2" fill="#808080"/>
<rect x="22" y="77" width="2" height="2" fill="#569cd6"/>
<rect x="26" y="77" width="8" height="2" fill="#9cdcfe"/>
<rect x="34" y="77" width="2" height="2" fill="#d4d4d4"/>
<rect x="36" y="77" width="6" height="2" fill="#ce9178"/>
<rect x="44" y="77" width="18" height="2" fill="#9cdcfe"/>
<rect x="62" y="77" width="2" height="2" fill="#d4d4d4"/>
<rect x="64" y="77" width="12" height="2" fill="#ce9178"/>
<rect x="78" y="77" width="20" height="2" fill="#9cdcfe"/>
<rect x="98" y="77" width="2" height="2" fill="#d4d4d4"/>
<rect x="100" y="77" width="8" height="2" fill="#ce9178"/>
<rect x="110" y="77" width="14" height="2" fill="#ce9178"/>
<rect x="126" y="77" width="6" height="2" fill="#ce9178"/>
<rect x="132" y="77" width="2" height="2" fill="#808080"/>
<rect x="20" y="81" width="2" height="2" fill="#808080"/>
<rect x="22" y="81" width="2" height="2" fill="#569cd6"/>
<rect x="26" y="81" width="10" height="2" fill="#9cdcfe"/>
<rect x="36" y="81" width="2" height="2" fill="#d4d4d4"/>
<rect x="38" y="81" width="8" height="2" fill="#ce9178"/>
<rect x="48" y="81" width="18" height="2" fill="#ce9178"/>
<rect x="66" y="81" width="2" height="2" fill="#808080"/>
<rect x="68" y="81" width="4" height="2" fill="#808080"/>
<rect x="72" y="81" width="2" height="2" fill="#569cd6"/>
<rect x="74" y="81" width="2" height="2" fill="#808080"/>
<rect x="78" y="81" width="6" height="2" fill="#e6414d"/>
<rect x="86" y="81" width="10" height="2" fill="#e6414d"/>
<rect x="96" y="81" width="24" height="2" fill="#d4d4d4"/>
<rect x="122" y="81" width="4" height="2" fill="#e6414d"/>
<rect x="16" y="85" width="4" height="2" fill="#808080"/>
<rect x="20" y="85" width="6" height="2" fill="#569cd6"/>
<rect x="26" y="85" width="2" height="2" fill="#808080"/>
<rect x="16" y="89" width="2" height="2" fill="#808080"/>
<rect x="18" y="89" width="6" height="2" fill="#569cd6"/>
<rect x="26" y="89" width="10" height="2" fill="#9cdcfe"/>
<rect x="36" y="89" width="2" height="2" fill="#d4d4d4"/>
<rect x="38" y="89" width="14" height="2" fill="#ce9178"/>
<rect x="54" y="89" width="38" height="2" fill="#ce9178"/>
<rect x="92" y="89" width="2" height="2" fill="#808080"/>
<rect x="20" y="93" width="2" height="2" fill="#808080"/>
<rect x="22" y="93" width="2" height="2" fill="#569cd6"/>
<rect x="26" y="93" width="8" height="2" fill="#9cdcfe"/>
<rect x="34" y="93" width="2" height="2" fill="#d4d4d4"/>
<rect x="36" y="93" width="6" height="2" fill="#ce9178"/>
<rect x="44" y="93" width="18" height="2" fill="#9cdcfe"/>
<rect x="62" y="93" width="2" height="2" fill="#d4d4d4"/>
<rect x="64" y="93" width="16" height="2" fill="#ce9178"/>
<rect x="82" y="93" width="20" height="2" fill="#9cdcfe"/>
<rect x="102" y="93" width="2" height="2" fill="#d4d4d4"/>
<rect x="104" y="93" width="8" height="2" fill="#ce9178"/>
<rect x="114" y="93" width="14" height="2" fill="#ce9178"/>
<rect x="130" y="93" width="6" height="2" fill="#ce9178"/>
<rect x="136" y="93" width="2" height="2" fill="#808080"/>
<rect x="20" y="97" width="2" height="2" fill="#808080"/>
<rect x="22" y="97" width="2" height="2" fill="#569cd6"/>
<rect x="26" y="97" width="10" height="2" fill="#9cdcfe"/>
<rect x="36" y="97" width="2" height="2" fill="#d4d4d4"/>
<rect x="38" y="97" width="8" height="2" fill="#ce9178"/>
<rect x="48" y="97" width="28" height="2" fill="#ce9178"/>
<rect x="76" y="97" width="2" height="2" fill="#808080"/>
<rect x="78" y="97" width="4" height="2" fill="#808080"/>
<rect x="82" y="97" width="2" height="2" fill="#569cd6"/>
<rect x="84" y="97" width="2" height="2" fill="#808080"/>
<rect x="88" y="97" width="6" height="2" fill="#e6414d"/>
<rect x="96" y="97" width="10" height="2" fill="#e6414d"/>
<rect x="106" y="97" width="28" height="2" fill="#d4d4d4"/>
<rect x="136" y="97" width="4" height="2" fill="#e6414d"/>
<rect x="16" y="101" width="4" height="2" fill="#808080"/>
<rect x="20" y="101" width="6" height="2" fill="#569cd6"/>
<rect x="26" y="101" width="2" height="2" fill="#808080"/>
<rect x="16" y="105" width="2" height="2" fill="#808080"/>
<rect x="18" y="105" width="6" height="2" fill="#569cd6"/>
<rect x="26" y="105" width="10" height="2" fill="#9cdcfe"/>
<rect x="36" y="105" width="2" height="2" fill="#d4d4d4"/>
<rect x="38" y="105" width="14" height="2" fill="#ce9178"/>
<rect x="54" y="105" width="38" height="2" fill="#ce9178"/>
<rect x="92" y="105" width="2" height="2" fill="#808080"/>
<rect x="20" y="109" width="6" height="2" fill="#e6414d"/>
<rect x="28" y="109" width="20" height="2" fill="#d4d4d4"/>
<rect x="50" y="109" width="6" height="2" fill="#9cdcfe"/>
<rect x="58" y="109" width="12" height="2" fill="#4ec9b0"/>
<rect x="70" y="109" width="34" height="2" fill="#d4d4d4"/>
<rect x="104" y="109" width="14" height="2" fill="#e6414d"/>
<rect x="118" y="109" width="2" height="2" fill="#d4d4d4"/>
<rect x="122" y="109" width="2" height="2" fill="#dcdcaa"/>
<rect x="124" y="109" width="8" height="2" fill="#9cdcfe"/>
<rect x="132" y="109" width="2" height="2" fill="#d4d4d4"/>
<rect x="136" y="109" width="10" height="2" fill="#e6414d"/>
<rect x="146" y="109" width="8" height="2" fill="#d4d4d4"/>
<rect x="156" y="109" width="4" height="2" fill="#c586c0"/>
<rect x="162" y="109" width="4" height="2" fill="#e6414d"/>
<rect x="24" y="113" width="2" height="2" fill="#808080"/>
<rect x="26" y="113" width="2" height="2" fill="#569cd6"/>
<rect x="30" y="113" width="10" height="2" fill="#9cdcfe"/>
<rect x="40" y="113" width="2" height="2" fill="#d4d4d4"/>
<rect x="42" y="113" width="8" height="2" fill="#ce9178"/>
<rect x="52" y="113" width="16" height="2" fill="#ce9178"/>
<rect x="68" y="113" width="2" height="2" fill="#808080"/>
<rect x="70" y="113" width="4" height="2" fill="#808080"/>
<rect x="74" y="113" width="2" height="2" fill="#569cd6"/>
<rect x="76" y="113" width="2" height="2" fill="#808080"/>
<rect x="20" y="117" width="4" height="2" fill="#e6414d"/>
<rect x="26" y="117" width="6" height="2" fill="#c586c0"/>
<rect x="34" y="117" width="4" height="2" fill="#e6414d"/>
<rect x="20" y="121" width="6" height="2" fill="#e6414d"/>
<rect x="28" y="121" width="8" height="2" fill="#d4d4d4"/>
<rect x="38" y="121" width="6" height="2" fill="#9cdcfe"/>
<rect x="46" y="121" width="6" height="2" fill="#ce9178"/>
<rect x="52" y="121" width="2" height="2" fill="#d4d4d4"/>
<rect x="56" y="121" width="20" height="2" fill="#9cdcfe"/>
<rect x="78" y="121" width="16" height="2" fill="#ce9178"/>
<rect x="94" y="121" width="2" height="2" fill="#d4d4d4"/>
<rect x="98" y="121" width="26" height="2" fill="#9cdcfe"/>
<rect x="126" y="121" width="10" height="2" fill="#e6414d"/>
<rect x="136" y="121" width="6" height="2" fill="#d4d4d4"/>
<rect x="144" y="121" width="4" height="2" fill="#c586c0"/>
<rect x="150" y="121" width="4" height="2" fill="#e6414d"/>
<rect x="24" y="125" width="2" height="2" fill="#808080"/>
<rect x="26" y="125" width="2" height="2" fill="#569cd6"/>
<rect x="30" y="125" width="10" height="2" fill="#9cdcfe"/>
<rect x="40" y="125" width="2" height="2" fill="#d4d4d4"/>
<rect x="42" y="125" width="8" height="2" fill="#ce9178"/>
<rect x="52" y="125" width="26" height="2" fill="#ce9178"/>
<rect x="78" y="125" width="2" height="2" fill="#808080"/>
<rect x="80" y="125" width="4" height="2" fill="#808080"/>
<rect x="84" y="125" width="2" height="2" fill="#569cd6"/>
<rect x="86" y="125" width="2" height="2" fill="#808080"/>
<rect x="20" y="129" width="4" height="2" fill="#e6414d"/>
<rect x="26" y="129" width="6" height="2" fill="#c586c0"/>
<rect x="34" y="129" width="4" height="2" fill="#e6414d"/>
<rect x="16" y="133" width="4" height="2" fill="#808080"/>
<rect x="20" y="133" width="6" height="2" fill="#569cd6"/>
<rect x="26" y="133" width="2" height="2" fill="#808080"/>
<rect x="12" y="137" width="4" height="2" fill="#808080"/>
<rect x="16" y="137" width="6" height="2" fill="#569cd6"/>
<rect x="22" y="137" width="2" height="2" fill="#808080"/>
<rect x="8" y="141" width="4" height="2" fill="#808080"/>
<rect x="12" y="141" width="6" height="2" fill="#569cd6"/>
<rect x="18" y="141" width="2" height="2" fill="#808080"/>
<rect x="8" y="145" width="6" height="2" fill="#b5cea8"/>
<rect x="4" y="149" width="6" height="2" fill="#c586c0"/>
<rect x="4" y="157" width="6" height="2" fill="#c586c0"/>
<rect x="12" y="157" width="24" height="2" fill="#dcdcaa"/>
<rect x="36" y="157" width="2" height="2" fill="#d4d4d4"/>
<rect x="38" y="157" width="12" height="2" fill="#ce9178"/>
<rect x="50" y="157" width="2" height="2" fill="#d4d4d4"/>
<rect x="54" y="157" width="4" height="2" fill="#d4d4d4"/>
<rect x="60" y="157" width="14" height="2" fill="#d4d4d4"/>
<rect x="76" y="157" width="4" height="2" fill="#c586c0"/>
<rect x="8" y="161" width="28" height="2" fill="#4ec9b0"/>
<rect x="36" y="161" width="62" height="2" fill="#d4d4d4"/>
<rect x="8" y="165" width="2" height="2" fill="#d4d4d4"/>
<rect x="10" y="165" width="2" height="2" fill="#dcdcaa"/>
<rect x="12" y="165" width="14" height="2" fill="#9cdcfe"/>
<rect x="26" y="165" width="2" height="2" fill="#d4d4d4"/>
<rect x="30" y="165" width="14" height="2" fill="#d4d4d4"/>
<rect x="4" y="169" width="6" height="2" fill="#c586c0"/>
<rect x="4" y="177" width="6" height="2" fill="#c586c0"/>
<rect x="12" y="177" width="24" height="2" fill="#dcdcaa"/>
<rect x="36" y="177" width="2" height="2" fill="#d4d4d4"/>
<rect x="38" y="177" width="16" height="2" fill="#ce9178"/>
<rect x="54" y="177" width="2" height="2" fill="#d4d4d4"/>
<rect x="58" y="177" width="4" height="2" fill="#d4d4d4"/>
<rect x="64" y="177" width="14" height="2" fill="#d4d4d4"/>
<rect x="80" y="177" width="4" height="2" fill="#c586c0"/>
<rect x="8" y="181" width="28" height="2" fill="#4ec9b0"/>
<rect x="36" y="181" width="66" height="2" fill="#d4d4d4"/>
<rect x="8" y="185" width="2" height="2" fill="#d4d4d4"/>
<rect x="10" y="185" width="2" height="2" fill="#dcdcaa"/>
<rect x="12" y="185" width="14" height="2" fill="#9cdcfe"/>
<rect x="26" y="185" width="2" height="2" fill="#d4d4d4"/>
<rect x="30" y="185" width="14" height="2" fill="#d4d4d4"/>
<rect x="4" y="189" width="6" height="2" fill="#c586c0"/>
<rect x="0" y="193" width="6" height="2" fill="#c586c0"/>
</g></svg>
<div style="position:absolute;left:2532px;top:158px;width:1px;height:1352px;background:#2b2b2b;"></div>
<div style="position:absolute;left:2532px;top:158px;width:28px;height:492px;background:#424242;"></div>
<div style="position:absolute;left:2532px;top:400px;width:28px;height:5px;background:#858585;"></div>
<div style="position:absolute;left:0px;top:1510px;width:2560px;height:44px;background:#007acc;"></div>
<span class="t" style="left:65.2px;top:1515.8px;font-size:24px;line-height:31px;color:#ffffff;letter-spacing:0.135px;-webkit-text-stroke:0.35px #fff;">master*</span>
<span class="t" style="left:276.0px;top:1515.8px;font-size:24px;line-height:31px;color:#ffffff;-webkit-text-stroke:0.35px #fff;">0</span>
<span class="t" style="left:331.0px;top:1515.8px;font-size:24px;line-height:31px;color:#ffffff;-webkit-text-stroke:0.35px #fff;">0</span>
<span class="t" style="left:411.0px;top:1515.8px;font-size:24px;line-height:31px;color:#ffffff;letter-spacing:-0.139px;-webkit-text-stroke:0.35px #fff;">CSS/SCSS classes cached (click to cache again)</span>
<span class="t" style="left:1894.6px;top:1515.8px;font-size:24px;line-height:31px;color:#ffffff;letter-spacing:-0.698px;-webkit-text-stroke:0.35px #fff;">Ln 15, Col 15</span>
<span class="t" style="left:2062.0px;top:1515.8px;font-size:24px;line-height:31px;color:#ffffff;letter-spacing:-0.217px;-webkit-text-stroke:0.35px #fff;">Spaces: 2</span>
<span class="t" style="left:2199.7px;top:1515.8px;font-size:24px;line-height:31px;color:#ffffff;letter-spacing:0.325px;-webkit-text-stroke:0.35px #fff;">UTF-8</span>
<span class="t" style="left:2302.0px;top:1515.8px;font-size:24px;line-height:31px;color:#ffffff;letter-spacing:-2.416px;-webkit-text-stroke:0.35px #fff;">LF</span>
<span class="t" style="left:2359.6px;top:1515.8px;font-size:24px;line-height:31px;color:#ffffff;letter-spacing:-0.320px;-webkit-text-stroke:0.35px #fff;">Elixir</span>
<svg style="position:absolute;left:0px;top:1510px" width="2560" height="44" viewBox="112 1586 2560 44" fill="none" stroke="#ffffff" stroke-width="2">
<circle cx="149.9" cy="1598.5" r="3.2"/><circle cx="161.9" cy="1603.4" r="3.2"/><circle cx="149.9" cy="1618" r="3.2"/>
<path d="M149.9 1601.8V1614.7M161.9 1606.7c0 4.2 -3 4.2 -5.5 4.2h-2c-2.8 0 -4.5 1.6 -4.5 3.8"/>
<path d="M296.3 1606.5a10.3 10.3 0 0 1 19.6 -2.2M311.6 1604.6L316.4 1605.6L318.6 1601.2"/>
<path d="M316.6 1609.5a10.3 10.3 0 0 1 -19.6 2.2M301.2 1611.4L296.4 1610.4L294.2 1614.8"/>
<circle cx="366.6" cy="1608" r="11"/><path d="M361.7 1603.1L371.5 1612.9M371.5 1603.1L361.7 1612.9"/>
<path d="M421.9 1597.6L432.2 1617.2H411.6z" stroke-linejoin="miter"/><path d="M421.9 1604.6V1611.2M421.9 1613V1615.3"/>
<path d="M502 1597.3H509.2L505.4 1605.6H509.9L498.6 1618.2L500.9 1610.8H496.6z" stroke-linejoin="miter" stroke-width="1.8"/>
<circle cx="2563.9" cy="1607.2" r="4.1"/><path d="M2556.4 1620.6a7.5 7.6 0 0 1 15 0"/>
<path d="M2562.6 1600V1596.9H2579.6V1607.2H2576.2L2573.2 1610.4V1607.2H2571.4" stroke-linejoin="miter"/>
<path d="M2619.2 1615.6H2636.8L2635.3 1610V1604.7a7.3 7.3 0 0 0 -14.6 0V1610z" stroke-linejoin="miter"/><path d="M2624.4 1616.2a3.7 3.7 0 0 0 7.2 0"/>
</svg>
<div style="position:absolute;left:0;top:0;right:0;bottom:0;border-radius:10px;box-shadow:inset 0 0 0 1.5px rgba(255,255,255,0.13);"></div>
</div>
</body></html>
